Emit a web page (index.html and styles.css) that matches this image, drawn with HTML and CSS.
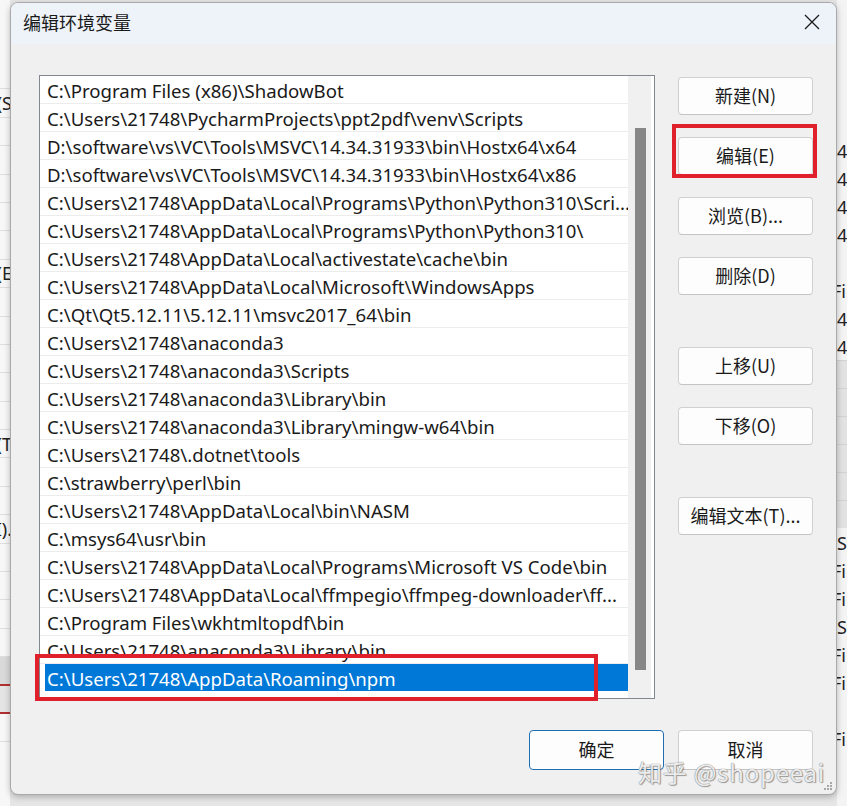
FILE: index.html
```html
<!DOCTYPE html>
<html lang="zh-CN">
<head>
<meta charset="utf-8">
<title>编辑环境变量</title>
<link rel="stylesheet" href="styles.css">
</head>
<body>
<div class="desk">
  <div class="bg-left">
    <div class="bgl-row"></div><div class="bgl-row"><span>(S</span></div><div class="bgl-row"></div><div class="bgl-row"></div>
    <div class="bgl-row"></div><div class="bgl-row"></div><div class="bgl-row"></div><div class="bgl-row"><span>(E</span></div>
    <div class="bgl-row"></div><div class="bgl-row"></div><div class="bgl-row"></div><div class="bgl-row"></div>
    <div class="bgl-row"></div><div class="bgl-row"><span>(T</span></div><div class="bgl-row"></div><div class="bgl-row"></div>
    <div class="bgl-row"><span>I).</span></div><div class="bgl-row"></div><div class="bgl-row"></div><div class="bgl-row"></div>
    <div class="bgl-row"></div><div class="bgl-row bgl-dark"></div><div class="bgl-row bgl-red"></div><div class="bgl-row"></div>
  </div>

  <div class="dialog">
    <div class="titlebar">
      <span class="title">编辑环境变量</span>
      <svg class="close" width="16" height="16" viewBox="0 0 16 16"><path d="M1 1 L15 15 M15 1 L1 15" stroke="#1b1b1b" stroke-width="1.3" fill="none"/></svg>
    </div>
    <div class="body">
      <div class="main">
        <div class="listwrap">
          <div class="list">
            <div class="rows">
              <div class="row"><span>C:\Program Files (x86)\ShadowBot</span></div>
              <div class="row"><span>C:\Users\21748\PycharmProjects\ppt2pdf\venv\Scripts</span></div>
              <div class="row"><span>D:\software\vs\VC\Tools\MSVC\14.34.31933\bin\Hostx64\x64</span></div>
              <div class="row"><span>D:\software\vs\VC\Tools\MSVC\14.34.31933\bin\Hostx64\x86</span></div>
              <div class="row"><span>C:\Users\21748\AppData\Local\Programs\Python\Python310\Scri...</span></div>
              <div class="row"><span>C:\Users\21748\AppData\Local\Programs\Python\Python310\</span></div>
              <div class="row"><span>C:\Users\21748\AppData\Local\activestate\cache\bin</span></div>
              <div class="row"><span>C:\Users\21748\AppData\Local\Microsoft\WindowsApps</span></div>
              <div class="row"><span>C:\Qt\Qt5.12.11\5.12.11\msvc2017_64\bin</span></div>
              <div class="row"><span>C:\Users\21748\anaconda3</span></div>
              <div class="row"><span>C:\Users\21748\anaconda3\Scripts</span></div>
              <div class="row"><span>C:\Users\21748\anaconda3\Library\bin</span></div>
              <div class="row"><span>C:\Users\21748\anaconda3\Library\mingw-w64\bin</span></div>
              <div class="row"><span>C:\Users\21748\.dotnet\tools</span></div>
              <div class="row"><span>C:\strawberry\perl\bin</span></div>
              <div class="row"><span>C:\Users\21748\AppData\Local\bin\NASM</span></div>
              <div class="row"><span>C:\msys64\usr\bin</span></div>
              <div class="row"><span>C:\Users\21748\AppData\Local\Programs\Microsoft VS Code\bin</span></div>
              <div class="row"><span>C:\Users\21748\AppData\Local\ffmpegio\ffmpeg-downloader\ff...</span></div>
              <div class="row"><span>C:\Program Files\wkhtmltopdf\bin</span></div>
              <div class="row"><span>C:\Users\21748\anaconda3\Library\bin</span></div>
              <div class="row selected"><span>C:\Users\21748\AppData\Roaming\npm</span></div>
            </div>
            <div class="scrollbar"><div class="thumb"></div></div>
          </div>
          <div class="redbox redbox-row"></div>
        </div>
        <div class="side">
          <div class="btn">新建(N)</div>
          <div class="btn gap-s edit">编辑(E)<div class="redbox redbox-btn"></div></div>
          <div class="btn gap-s">浏览(B)...</div>
          <div class="btn gap-s">删除(D)</div>
          <div class="btn gap-l">上移(U)</div>
          <div class="btn gap-s">下移(O)</div>
          <div class="btn gap-l">编辑文本(T)...</div>
        </div>
      </div>
      <div class="footer">
        <div class="btn default">确定</div>
        <div class="btn">取消</div>
      </div>
    </div>
    <div class="watermark">知乎 @shopeeai</div>
    <svg class="grip" width="10" height="10" viewBox="0 0 10 10">
      <rect x="7" y="1" width="2" height="2" fill="#a8a8a8"/>
      <rect x="4" y="4" width="2" height="2" fill="#a8a8a8"/><rect x="7" y="4" width="2" height="2" fill="#a8a8a8"/>
      <rect x="1" y="7" width="2" height="2" fill="#a8a8a8"/><rect x="4" y="7" width="2" height="2" fill="#a8a8a8"/><rect x="7" y="7" width="2" height="2" fill="#a8a8a8"/>
    </svg>
  </div>

  <div class="bg-right">
    <div class="bgr-row"></div><div class="bgr-row"></div><div class="bgr-row"></div><div class="bgr-row"></div>
    <div class="bgr-row"><span>4</span></div><div class="bgr-row"><span>4</span></div><div class="bgr-row"><span>4</span></div><div class="bgr-row"><span>4</span></div>
    <div class="bgr-row"></div><div class="bgr-row"><span class="cut">Fil</span></div><div class="bgr-row"><span>4</span></div><div class="bgr-row"><span>4</span></div>
    <div class="bgr-row dark"></div><div class="bgr-row dark"></div><div class="bgr-row dark"></div><div class="bgr-row dark"></div>
    <div class="bgr-row dark"></div><div class="bgr-row dark"></div><div class="bgr-row"><span>Sy</span></div><div class="bgr-row"><span class="cut">Fil</span></div>
    <div class="bgr-row"><span class="cut">Fil</span></div><div class="bgr-row"><span>Sy</span></div><div class="bgr-row"><span class="cut">Fil</span></div><div class="bgr-row"><span class="cut">Fil</span></div>
    <div class="bgr-row"></div><div class="bgr-row"><span class="cut">Fil</span></div>
  </div>
</div>
</body>
</html>
```

FILE: styles.css
```css
* { box-sizing: border-box; }
html, body { margin: 0; padding: 0; }
body {
  width: 847px;
  height: 806px;
  overflow: hidden;
  background: #e6e6e6;
  font-family: "Noto Sans", "Noto Sans CJK SC", sans-serif;
  color: #1a1a1a;
}
.desk {
  display: flex;
  width: 847px;
  height: 806px;
  align-items: flex-start;
}
.bg-left {
  width: 10px;
  height: 806px;
  flex: none;
  overflow: hidden;
  background: #f7f7f7;
  padding-top: 61px;
  font-family: "Noto Sans", sans-serif;
  font-size: 18px;
}
.bgl-row {
  height: 28.4px;
  border-bottom: 1px solid #dedede;
  display: flex;
  justify-content: flex-end;
  align-items: center;
  white-space: nowrap;
}
.bgl-row span { margin-right: -2px; color: #222; }
.bgl-dark { background: #d9d9d9; border-bottom: 2px solid #b03030; }
.bgl-red { background: #e4e4e4; border-bottom: 2px solid #b03030; }

.bg-right {
  width: 10px;
  height: 806px;
  flex: none;
  overflow: hidden;
  background: #f4f4f4;
  padding-top: 24px;
  font-family: "Noto Sans", sans-serif;
  font-size: 18px;
}
.bgr-row {
  height: 28px;
  display: flex;
  align-items: center;
  white-space: nowrap;
  border-top: 1px solid transparent;
}
.bgr-row.dark { background: #e2e2e2; border-top: 1px solid #d2d2d2; }
.bgr-row span { color: #222; }
.bgr-row span.cut { margin-left: -5px; }

.dialog {
  position: relative;
  flex: none;
  width: 827px;
  height: 793px;
  margin-top: 2px;
  background: #f0f0f0;
  border: 1px solid #a9a9a9;
  border-radius: 8px;
  box-shadow: 0 2px 6px rgba(0,0,0,0.25);
  overflow: hidden;
  display: flex;
  flex-direction: column;
}
.titlebar {
  height: 41px;
  flex: none;
  background: #eef3f9;
  display: flex;
  align-items: center;
  justify-content: space-between;
  padding: 0 16px 0 12px;
}
.title {
  font-family: "Noto Sans CJK SC", sans-serif;
  font-size: 18px;
  color: #1a1a1a;
  margin-top: -4px;
}
.close { display: block; margin-top: -3px; }

.body {
  flex: 1;
  display: flex;
  flex-direction: column;
  padding: 31px 23px 0 28px;
}
.main {
  display: flex;
  gap: 23px;
}
.listwrap {
  position: relative;
  width: 616px;
  flex: none;
}
.list {
  width: 616px;
  height: 624px;
  background: #ffffff;
  border: 1px solid #828790;
  display: flex;
  overflow: hidden;
}
.rows {
  width: 588px;
  flex: none;
  overflow: hidden;
}
.row {
  height: 28px;
  border-bottom: 1px solid #ececec;
  padding-left: 5px;
  display: flex;
  white-space: nowrap;
  overflow: hidden;
}
.row span {
  display: block;
  flex: 1;
  padding-left: 2px;
  padding-top: 2px;
  font-size: 18.6px;
  line-height: 25px;
  color: #1a1a1a;
  overflow: hidden;
}
.row.selected { border-bottom-color: transparent; }
.row.selected span {
  background: #0078d7;
  color: #ffffff;
}
.scrollbar {
  width: 23px;
  flex: none;
  background: #f0f0f0;
  padding: 52px 0 0 7px;
}
.thumb {
  width: 11px;
  height: 542px;
  background: #878787;
}

.redbox {
  position: absolute;
  border: 4px solid #e0212c;
  pointer-events: none;
}
.redbox-row {
  left: -4px;
  top: 579px;
  width: 563px;
  height: 47px;
}

.side {
  display: flex;
  flex-direction: column;
  padding-top: 2px;
}
.btn {
  width: 135px;
  height: 38px;
  background: #fdfdfd;
  border: 1px solid #d0d0d0;
  border-bottom-color: #c4c4c4;
  border-radius: 4px;
  display: flex;
  align-items: center;
  justify-content: center;
  padding-bottom: 3px;
  font-family: "Noto Sans CJK SC", sans-serif;
  font-size: 18px;
  color: #1a1a1a;
  position: relative;
}
.gap-s { margin-top: 22px; }
.gap-l { margin-top: 52px; }
.redbox-btn {
  left: -7px;
  top: -14px;
  width: 145px;
  height: 54px;
}

.footer {
  display: flex;
  justify-content: flex-end;
  gap: 14px;
  margin-top: 31px;
}
.footer .btn { height: 40px; }
.btn.default {
  border: 1px solid #1f6fb0;
}

.watermark {
  position: absolute;
  left: 627px;
  top: 751px;
  font-family: "Noto Sans CJK SC", sans-serif;
  font-size: 24px;
  color: rgba(255,255,255,0.85);
  text-shadow: 0 0 1px #8a8a8a, 0 0 1px #8a8a8a, 1px 1px 1px rgba(0,0,0,0.35);
  letter-spacing: 0.8px;
  white-space: nowrap;
}
.grip {
  position: absolute;
  right: 3px;
  bottom: 3px;
}
```
